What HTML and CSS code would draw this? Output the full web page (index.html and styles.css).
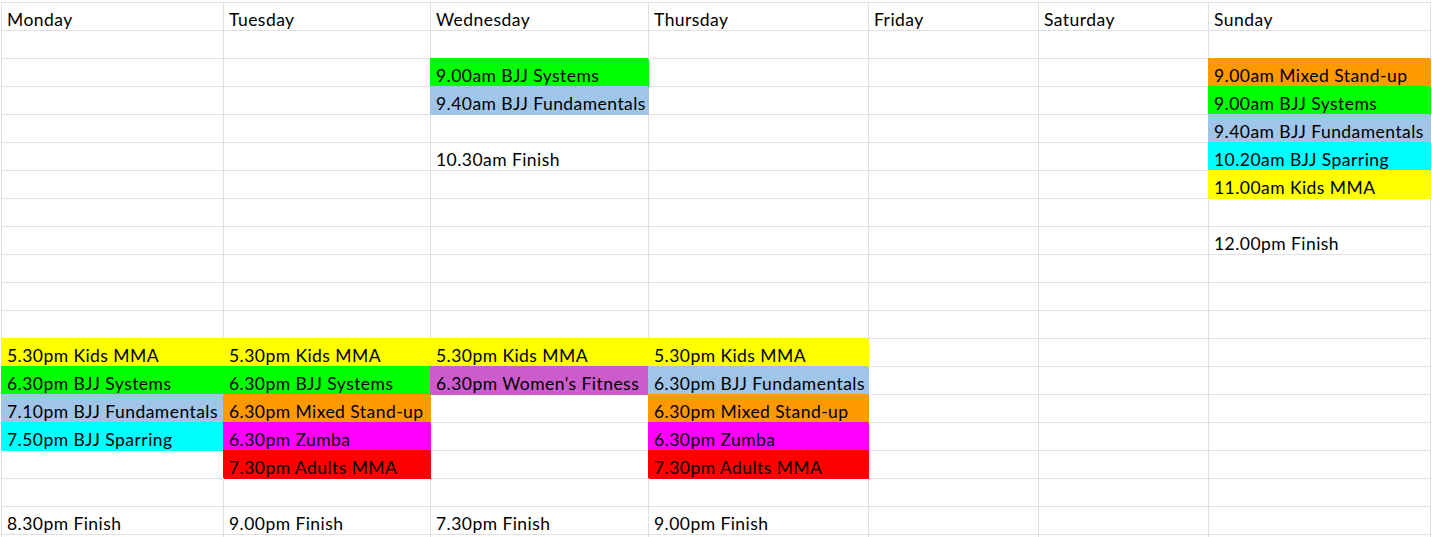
FILE: index.html
```html
<!DOCTYPE html>
<html lang="en">
<head>
<meta charset="utf-8">
<title>Timetable</title>
<link rel="stylesheet" href="styles.css">
</head>
<body>
<div class="sheet">
  <div class="c">Monday</div><div class="c">Tuesday</div><div class="c">Wednesday</div><div class="c">Thursday</div><div class="c">Friday</div><div class="c">Saturday</div><div class="c">Sunday</div>
  <div class="c"></div><div class="c"></div><div class="c"></div><div class="c"></div><div class="c"></div><div class="c"></div><div class="c"></div>
  <div class="c"></div><div class="c"></div><div class="c green">9.00am BJJ Systems</div><div class="c"></div><div class="c"></div><div class="c"></div><div class="c orange">9.00am Mixed Stand-up</div>
  <div class="c"></div><div class="c"></div><div class="c blue">9.40am BJJ Fundamentals</div><div class="c"></div><div class="c"></div><div class="c"></div><div class="c green">9.00am BJJ Systems</div>
  <div class="c"></div><div class="c"></div><div class="c"></div><div class="c"></div><div class="c"></div><div class="c"></div><div class="c blue">9.40am BJJ Fundamentals</div>
  <div class="c"></div><div class="c"></div><div class="c">10.30am Finish</div><div class="c"></div><div class="c"></div><div class="c"></div><div class="c cyan">10.20am BJJ Sparring</div>
  <div class="c"></div><div class="c"></div><div class="c"></div><div class="c"></div><div class="c"></div><div class="c"></div><div class="c yellow">11.00am Kids MMA</div>
  <div class="c"></div><div class="c"></div><div class="c"></div><div class="c"></div><div class="c"></div><div class="c"></div><div class="c"></div>
  <div class="c"></div><div class="c"></div><div class="c"></div><div class="c"></div><div class="c"></div><div class="c"></div><div class="c">12.00pm Finish</div>
  <div class="c"></div><div class="c"></div><div class="c"></div><div class="c"></div><div class="c"></div><div class="c"></div><div class="c"></div>
  <div class="c"></div><div class="c"></div><div class="c"></div><div class="c"></div><div class="c"></div><div class="c"></div><div class="c"></div>
  <div class="c"></div><div class="c"></div><div class="c"></div><div class="c"></div><div class="c"></div><div class="c"></div><div class="c"></div>
  <div class="c yellow">5.30pm Kids MMA</div><div class="c yellow">5.30pm Kids MMA</div><div class="c yellow">5.30pm Kids MMA</div><div class="c yellow">5.30pm Kids MMA</div><div class="c"></div><div class="c"></div><div class="c"></div>
  <div class="c green">6.30pm BJJ Systems</div><div class="c green">6.30pm BJJ Systems</div><div class="c purple">6.30pm Women's Fitness</div><div class="c blue">6.30pm BJJ Fundamentals</div><div class="c"></div><div class="c"></div><div class="c"></div>
  <div class="c blue">7.10pm BJJ Fundamentals</div><div class="c orange">6.30pm Mixed Stand-up</div><div class="c"></div><div class="c orange">6.30pm Mixed Stand-up</div><div class="c"></div><div class="c"></div><div class="c"></div>
  <div class="c cyan">7.50pm BJJ Sparring</div><div class="c magenta">6.30pm Zumba</div><div class="c"></div><div class="c magenta">6.30pm Zumba</div><div class="c"></div><div class="c"></div><div class="c"></div>
  <div class="c"></div><div class="c red">7.30pm Adults MMA</div><div class="c"></div><div class="c red">7.30pm Adults MMA</div><div class="c"></div><div class="c"></div><div class="c"></div>
  <div class="c"></div><div class="c"></div><div class="c"></div><div class="c"></div><div class="c"></div><div class="c"></div><div class="c"></div>
  <div class="c">8.30pm Finish</div><div class="c">9.00pm Finish</div><div class="c">7.30pm Finish</div><div class="c">9.00pm Finish</div><div class="c"></div><div class="c"></div><div class="c"></div>
  <div class="c"></div><div class="c"></div><div class="c"></div><div class="c"></div><div class="c"></div><div class="c"></div><div class="c"></div>
</div>
</body>
</html>
```

FILE: styles.css
```css
html, body {
  margin: 0;
  padding: 0;
  overflow: hidden;
  background: #ffffff;
}

.sheet {
  display: grid;
  grid-template-columns: 222px 207px 218px 220px 170px 170px 222px;
  grid-auto-rows: 28px;
  width: max-content;
  margin: 2px 0 0 1px;
  border-top: 1px solid #e0e0e0;
  border-left: 1px solid #e0e0e0;
  font-family: Lato, "Open Sans", sans-serif;
  font-size: 17.5px;
  letter-spacing: 0.45px;
  color: #000000;
}

.c {
  box-sizing: border-box;
  border-right: 1px solid #e0e0e0;
  border-bottom: 1px solid #e0e0e0;
  display: flex;
  align-items: flex-end;
  padding: 0 0 0 5px;
  line-height: 1.2;
  white-space: nowrap;
  overflow: visible;
}

.green { background: #00ff00; border-color: #00ff00; box-shadow: -1px -1px 0 #00ff00; }
.blue { background: #9fc5e8; border-color: #9fc5e8; box-shadow: -1px -1px 0 #9fc5e8; }
.orange { background: #ff9900; border-color: #ff9900; box-shadow: -1px -1px 0 #ff9900; }
.cyan { background: #00ffff; border-color: #00ffff; box-shadow: -1px -1px 0 #00ffff; }
.yellow { background: #ffff00; border-color: #ffff00; box-shadow: -1px -1px 0 #ffff00; }
.magenta { background: #ff00ff; border-color: #ff00ff; box-shadow: -1px -1px 0 #ff00ff; }
.red { background: #ff0000; border-color: #ff0000; box-shadow: -1px -1px 0 #ff0000; }
.purple { background: #cc5ccc; border-color: #cc5ccc; box-shadow: -1px -1px 0 #cc5ccc; }
```
